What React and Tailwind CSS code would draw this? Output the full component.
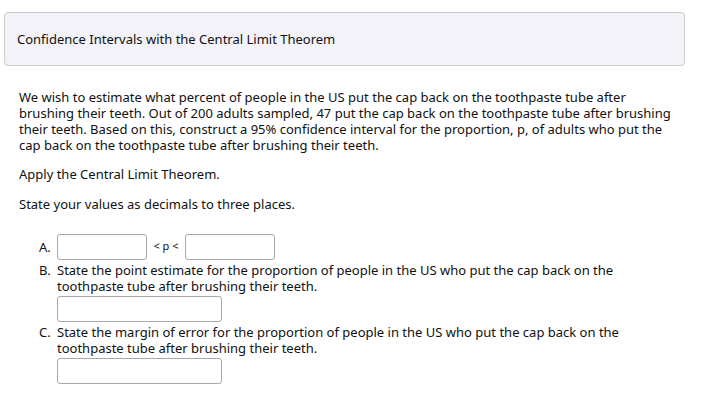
function Box({ className }) {
  return <input type="text" className={"block h-[26px] rounded-[3px] border border-[#a8a8a8] bg-white " + className} />;
}

export default function App() {
  return (
    <div className="min-h-[400px] bg-white text-[13px] leading-[16px] text-[#111]" style={{ fontFamily: '"Noto Sans", sans-serif' }}>
      <div className="pl-[4px] pt-[12px] w-[685px]">
        <div className="h-[54px] rounded-[4px] border border-[#cbcbcb] bg-[#f3f2f8] pl-[12px] flex items-center">
          Confidence Intervals with the Central Limit Theorem
        </div>
      </div>

      <div className="pl-[19px] pt-[23px] w-[675px]">
        <p>
          We wish to estimate what percent of people in the US put the cap back on the toothpaste tube after brushing their
          teeth. Out of 200 adults sampled, 47 put the cap back on the toothpaste tube after brushing their teeth. Based on
          this, construct a 95% confidence interval for the proportion, p, of adults who put the cap back on the toothpaste
          tube after brushing their teeth.
        </p>
        <p className="mt-[13px]">Apply the Central Limit Theorem.</p>
        <p className="mt-[14px]">State your values as decimals to three places.</p>

        <div className="mt-[22px] pl-[20px]">
          <div className="flex items-center">
            <span className="w-[18px]">A.</span>
            <Box className="w-[90px]" />
            <span className="mx-[5px] w-[28px] text-center text-[11px] -mt-[2px] whitespace-pre">&lt; p &lt;</span>
            <Box className="w-[90px]" />
          </div>

          <div className="flex mt-[2px]">
            <span className="w-[18px] shrink-0">B.</span>
            <div className="flex-1">
              <p>State the point estimate for the proportion of people in the US who put the cap back on the toothpaste tube after brushing their teeth.</p>
              <Box className="w-[165px] mt-[2px]" />
            </div>
          </div>

          <div className="flex mt-[2px]">
            <span className="w-[18px] shrink-0">C.</span>
            <div className="flex-1">
              <p>State the margin of error for the proportion of people in the US who put the cap back on the toothpaste tube after brushing their teeth.</p>
              <Box className="w-[165px] mt-[2px]" />
            </div>
          </div>
        </div>
      </div>
    </div>
  );
}
